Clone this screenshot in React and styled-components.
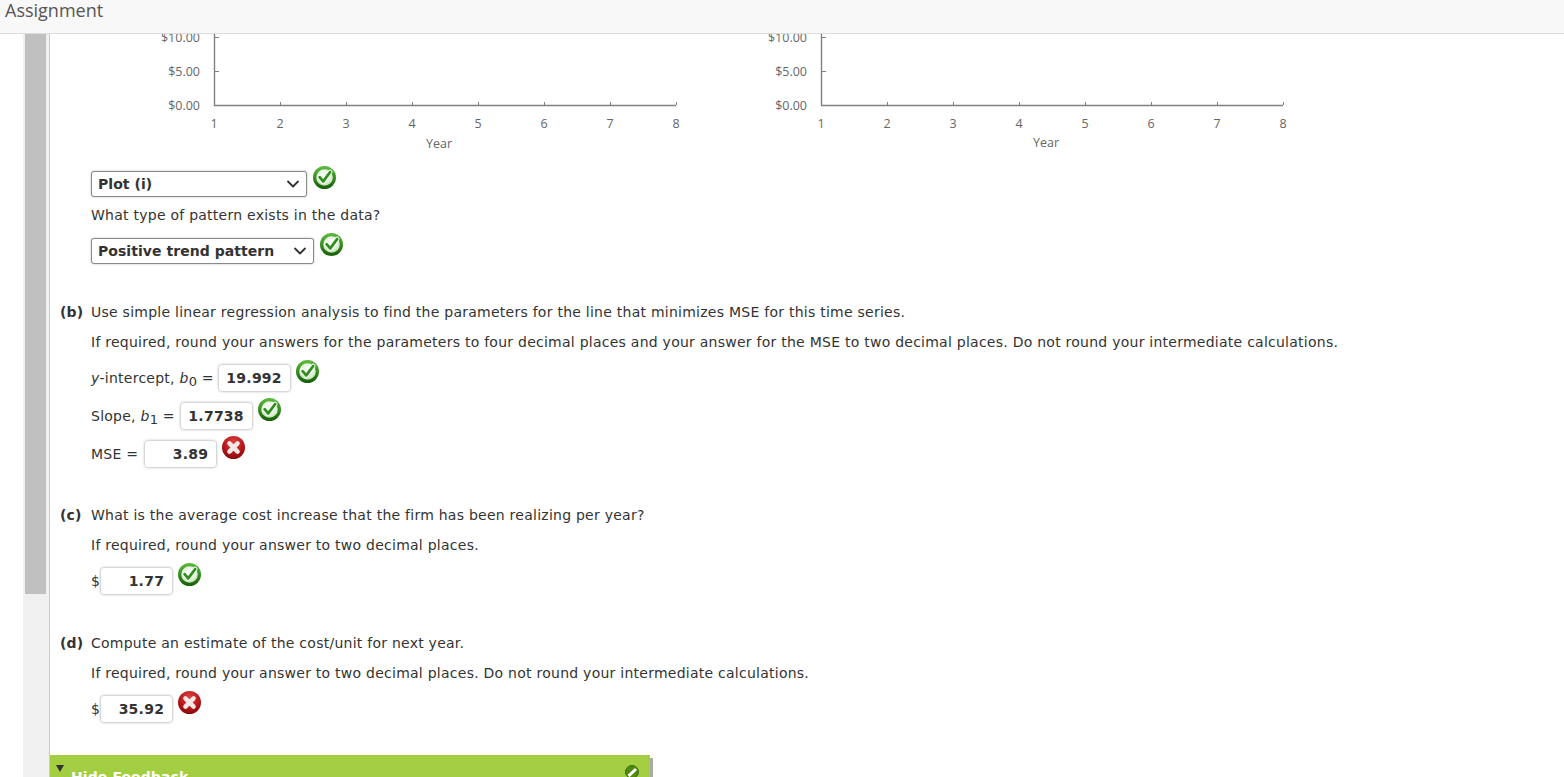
import React from 'react'
import styled, { createGlobalStyle } from 'styled-components'
import { ChevronDown } from 'lucide-react'

const GlobalStyle = createGlobalStyle`
    html, body {
        margin: 0;
        padding: 0;
        height: 100%;
        overflow: hidden;
        background: #fff;
    }
`
const Page = styled.div`
    display: flex;
    flex-direction: column;
    height: 777px;
    overflow: hidden;
    font-family: 'DejaVu Sans', Verdana, sans-serif;
    font-size: 14px;
    letter-spacing: 0.25px;
    color: #333;
`
const Header = styled.header`
    flex: 0 0 33px;
    padding-left: 5px;
    background: #f8f8f8;
    border-bottom: 1px solid #ddd;
    font-family: 'Open Sans', sans-serif;
    font-size: 18px;
    letter-spacing: 0;
    line-height: 20px;
    color: #555;
`
const Body = styled.div`
    flex: 1;
    display: flex;
    min-height: 0;
    padding-left: 23px;
`
const Rail = styled.div`
    flex: 0 0 27px;
    padding: 0 3px 0 2px;
    box-sizing: border-box;
    background: #f0f0f0;
    border-right: 1px solid #ccc;
`
const Thumb = styled.div`
    height: 560px;
    background: #c0c0c0;
`
const Main = styled.main`
    flex: 1;
    min-width: 0;
    overflow: hidden;
`
const ChartRow = styled.div`
    display: flex;
    gap: 57px;
    padding-left: 100px;
`
const ChartSvg = styled.svg`
    display: block;
    flex: 0 0 550px;
    height: 121px;
    font-family: 'Open Sans', sans-serif;
    font-size: 12.5px;
    letter-spacing: 0;
    fill: #666;
`
const Section = styled.section`
    padding-left: 10px;
    margin-top: ${p => p.$top}px;
`
const Line = styled.div`
    height: 16px;
    line-height: 16px;
    margin-top: ${p => p.$top || 0}px;
    padding-left: ${p => (p.$indent ? 31 : 0)}px;
    white-space: nowrap;
    color: #333;
`
const PartLabel = styled.b`
    display: inline-block;
    width: 31px;
    letter-spacing: 0.15px;
`
const FieldRow = styled.div`
    display: flex;
    align-items: flex-start;
    height: 26px;
    margin-top: ${p => p.$top || 0}px;
    padding-left: 31px;
    white-space: nowrap;
`
const FieldLabel = styled.span`
    line-height: 26px;
    margin-right: ${p => p.$gap}px;
`
const SubScript = styled.sub`
    font-size: 13px;
    line-height: 0;
    vertical-align: -3px;
`
const DropDown = styled.div`
    display: flex;
    align-items: center;
    justify-content: space-between;
    box-sizing: border-box;
    width: ${p => p.$width}px;
    height: 26px;
    padding: 0 3px 0 6px;
    background: #fff;
    border: 1px solid #8a8a8a;
    border-radius: 3px;
    box-shadow: 0 0 2px rgba(0, 0, 0, 0.3);
    font-weight: bold;
    letter-spacing: 0.05px;
    color: #333;
`
const Answer = styled.div`
    box-sizing: border-box;
    width: 71px;
    height: 26px;
    padding-right: 8px;
    background: #fff;
    border-radius: 3px;
    box-shadow: 0 0 3px rgba(0, 0, 0, 0.45);
    font-weight: bold;
    line-height: 27px;
    text-align: right;
    color: #333;
`
const Mark = styled.svg`
    display: block;
    flex: 0 0 23px;
    width: 23px;
    height: 23px;
    margin: -5px 0 0 6px;
`
const FeedbackBar = styled.div`
    display: flex;
    align-items: flex-start;
    justify-content: space-between;
    box-sizing: border-box;
    width: 600px;
    height: 40px;
    margin-top: 33px;
    padding: 10px 11px 0 6px;
    background: #a4ce41;
    box-shadow: 3px 3px 0 #aaa;
    font-weight: bold;
    letter-spacing: 0.1px;
    color: #fff;
`
const FeedbackTitle = styled.div`
    display: flex;
    gap: 7px;
    line-height: 16px;
    padding-top: 4px;
`
const Arrow = styled.span`
    width: 0;
    height: 0;
    margin-top: -4px;
    border-style: solid;
    border-width: 7px 4px 0;
    border-color: #333 transparent transparent;
`
const CollapseDot = styled.svg`
    display: block;
    width: 14px;
    height: 14px;
`

const yLabels = [['$10.00', 3], ['$5.00', 37], ['$0.00', 71]]
const xLabels = [1, 2, 3, 4, 5, 6, 7, 8]

const Chart = ({ yearY }) => (
    <ChartSvg viewBox="0 0 550 121">
        <path d="M64.5 0V71.5H526" fill="none" stroke="#808080" strokeWidth="1.4" />
        <path d="M64.5 3.5H69M64.5 37.5H69" fill="none" stroke="#808080" strokeWidth="1" />
        {xLabels.slice(1).map(n => (
            <path key={n} d={`M${64.5 + (n - 1) * 66} 71V68`} stroke="#808080" strokeWidth="1" />
        ))}
        {yLabels.map(([label, y]) => (
            <text key={label} x="50" y={y + 5} textAnchor="end">{label}</text>
        ))}
        {xLabels.map(n => (
            <text key={n} x={64 + (n - 1) * 66} y="94" textAnchor="middle">{n}</text>
        ))}
        <text x="289" y={yearY} textAnchor="middle">Year</text>
    </ChartSvg>
)

const Correct = () => (
    <Mark viewBox="0 0 23 23">
        <defs>
            <radialGradient id="okFill" cx="50%" cy="40%" r="60%">
                <stop offset="0%" stopColor="#ffffff" />
                <stop offset="60%" stopColor="#dff0d6" />
                <stop offset="100%" stopColor="#a9d893" />
            </radialGradient>
            <linearGradient id="okRing" x1="0" y1="0" x2="0" y2="1">
                <stop offset="0%" stopColor="#58b83a" />
                <stop offset="100%" stopColor="#1a640c" />
            </linearGradient>
        </defs>
        <circle cx="11.5" cy="11.5" r="9.9" fill="url(#okFill)" stroke="url(#okRing)" strokeWidth="3.2" />
        <path d="M6.6 11.2l3.6 4.2 7-9.4" fill="none" stroke="#ffffff" strokeWidth="4.6" strokeLinecap="round" strokeLinejoin="round" />
        <path d="M6.6 11.2l3.6 4.2 7-9.4" fill="none" stroke="#2f8f1c" strokeWidth="2.8" strokeLinecap="round" strokeLinejoin="round" />
    </Mark>
)

const Wrong = () => (
    <Mark viewBox="0 0 23 23">
        <defs>
            <radialGradient id="badFill" cx="50%" cy="30%" r="75%">
                <stop offset="0%" stopColor="#e2453f" />
                <stop offset="60%" stopColor="#b5161a" />
                <stop offset="100%" stopColor="#7c0709" />
            </radialGradient>
        </defs>
        <circle cx="11.5" cy="11.5" r="11.5" fill="url(#badFill)" />
        <path d="M7.4 7.4l8.2 8.2M15.6 7.4l-8.2 8.2" fill="none" stroke="#f4e9e6" strokeWidth="4.4" strokeLinecap="round" />
    </Mark>
)

const App = () => (
    <Page>
        <GlobalStyle />
        <Header>Assignment</Header>
        <Body>
            <Rail><Thumb /></Rail>
            <Main>
                <ChartRow>
                    <Chart yearY={114} />
                    <Chart yearY={113} />
                </ChartRow>

                <Section $top={16}>
                    <FieldRow>
                        <DropDown $width={216}>Plot (i)<ChevronDown size={20} strokeWidth={2.2} color="#333" /></DropDown>
                        <Correct />
                    </FieldRow>
                    <Line $indent $top={10}>What type of pattern exists in the data?</Line>
                    <FieldRow $top={15}>
                        <DropDown $width={223}>Positive trend pattern<ChevronDown size={20} strokeWidth={2.2} color="#333" /></DropDown>
                        <Correct />
                    </FieldRow>
                </Section>

                <Section $top={40}>
                    <Line><PartLabel>(b)</PartLabel>Use simple linear regression analysis to find the parameters for the line that minimizes MSE for this time series.</Line>
                    <Line $indent $top={14}>If required, round your answers for the parameters to four decimal places and your answer for the MSE to two decimal places. Do not round your intermediate calculations.</Line>
                    <FieldRow $top={15}>
                        <FieldLabel $gap={5}><i>y</i>-intercept, <i>b</i><SubScript>0</SubScript> =</FieldLabel>
                        <Answer>19.992</Answer>
                        <Correct />
                    </FieldRow>
                    <FieldRow $top={12}>
                        <FieldLabel $gap={6}>Slope, <i>b</i><SubScript>1</SubScript> =</FieldLabel>
                        <Answer>1.7738</Answer>
                        <Correct />
                    </FieldRow>
                    <FieldRow $top={12}>
                        <FieldLabel $gap={7}>MSE =</FieldLabel>
                        <Answer>3.89</Answer>
                        <Wrong />
                    </FieldRow>
                </Section>

                <Section $top={40}>
                    <Line><PartLabel>(c)</PartLabel>What is the average cost increase that the firm has been realizing per year?</Line>
                    <Line $indent $top={14}>If required, round your answer to two decimal places.</Line>
                    <FieldRow $top={15}>
                        <FieldLabel $gap={1}>$</FieldLabel>
                        <Answer>1.77</Answer>
                        <Correct />
                    </FieldRow>
                </Section>

                <Section $top={41}>
                    <Line><PartLabel>(d)</PartLabel>Compute an estimate of the cost/unit for next year.</Line>
                    <Line $indent $top={14}>If required, round your answer to two decimal places. Do not round your intermediate calculations.</Line>
                    <FieldRow $top={15}>
                        <FieldLabel $gap={1}>$</FieldLabel>
                        <Answer>35.92</Answer>
                        <Wrong />
                    </FieldRow>
                </Section>

                <FeedbackBar>
                    <FeedbackTitle><Arrow />Hide Feedback</FeedbackTitle>
                    <CollapseDot viewBox="0 0 14 14">
                        <circle cx="7" cy="7" r="6.5" fill="#4f8a10" stroke="#3f6f0c" />
                        <path d="M3.5 11L11 4" stroke="#fff" strokeWidth="3" />
                    </CollapseDot>
                </FeedbackBar>
            </Main>
        </Body>
    </Page>
)

export default App
